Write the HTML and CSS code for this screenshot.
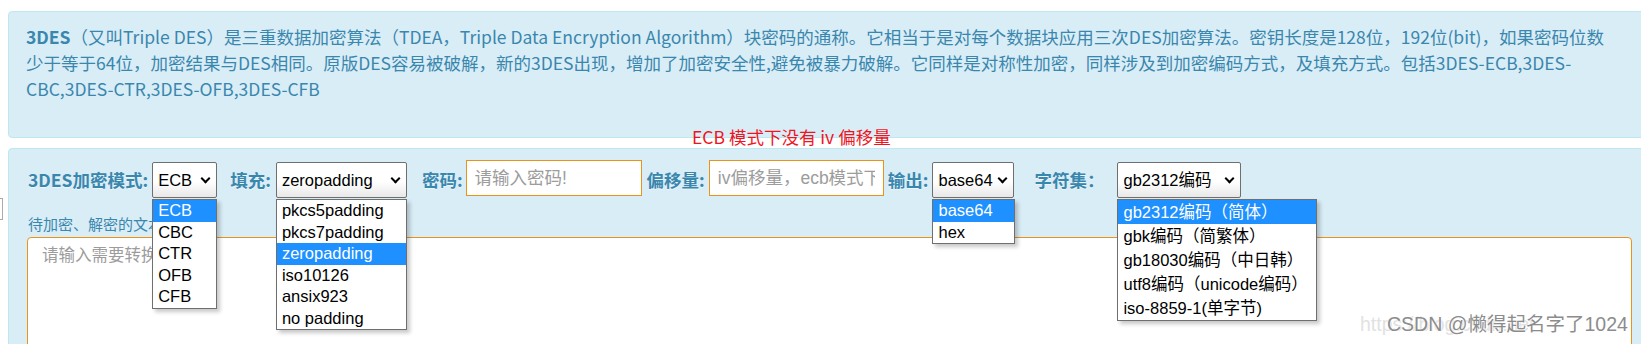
FILE: index.html
```html
<!DOCTYPE html>
<html lang="zh-CN">
<head>
  <meta charset="UTF-8" />
  <title>3DES加密解密</title>
  <link rel="stylesheet" href="styles.css">
</head>
<body>
  <div class="page">
    <div class="alert intro">
      <p><b>3DES</b>（又叫Triple DES）是三重数据加密算法（TDEA，Triple Data Encryption Algorithm）块密码的通称。它相当于是对每个数据块应用三次DES加密算法。密钥长度是128位，192位(bit)，如果密码位数少于等于64位，加密结果与DES相同。原版DES容易被破解，新的3DES出现，增加了加密安全性,避免被暴力破解。它同样是对称性加密，同样涉及到加密编码方式，及填充方式。包括3DES-ECB,3DES-CBC,3DES-CTR,3DES-OFB,3DES-CFB</p>
    </div>

    <div class="tip">ECB 模式下没有 iv 偏移量</div>

    <div class="alert tool">
      <div class="row">
        <label class="lbl">3DES加密模式:</label>
        <div class="sel sel-mode">
          <select><option>ECB</option></select>
          <ul class="pop">
            <li class="on">ECB</li>
            <li>CBC</li>
            <li>CTR</li>
            <li>OFB</li>
            <li>CFB</li>
          </ul>
        </div>

        <label class="lbl lbl-pad">填充:</label>
        <div class="sel sel-pad">
          <select><option>zeropadding</option></select>
          <ul class="pop">
            <li>pkcs5padding</li>
            <li>pkcs7padding</li>
            <li class="on">zeropadding</li>
            <li>iso10126</li>
            <li>ansix923</li>
            <li>no padding</li>
          </ul>
        </div>

        <label class="lbl lbl-key">密码:</label>
        <input type="text" class="txt txt-key" placeholder="请输入密码!">

        <label class="lbl lbl-iv">偏移量:</label>
        <input type="text" class="txt txt-iv" placeholder="iv偏移量，ecb模式下不需要">

        <label class="lbl lbl-out">输出:</label>
        <div class="sel sel-out">
          <select><option>base64</option></select>
          <ul class="pop">
            <li class="on">base64</li>
            <li>hex</li>
          </ul>
        </div>

        <label class="lbl lbl-cs">字符集：</label>
        <div class="sel sel-cs">
          <select><option>gb2312编码</option></select>
          <ul class="pop pop-cjk">
            <li class="on">gb2312编码（简体）</li>
            <li>gbk编码（简繁体）</li>
            <li>gb18030编码（中日韩）</li>
            <li>utf8编码（unicode编码）</li>
            <li>iso-8859-1(单字节)</li>
          </ul>
        </div>
      </div>

      <div class="hint">待加密、解密的文本：</div>
      <textarea class="src" placeholder="请输入需要转换的文本"></textarea>
    </div>

    <div class="stub"></div>

    <div class="mark">
      <span class="mark-url">https://blog.csdn.net</span>
      <span class="mark-name">CSDN @懒得起名字了1024</span>
    </div>
  </div>
</body>
</html>
```

FILE: styles.css
```css
:root {
  --info-bg: #d9edf7;
  --info-border: #bce8f1;
  --info-text: #3a87ad;
  --orange: #eb9316;
  --pick: #1e90ff;
}

html, body {
  margin: 0;
  padding: 0;
  background: #fff;
  overflow: hidden;
}

.page {
  position: relative;
  padding: 11px 0 0 8px;
  width: 1643px;
  height: 344px;
  box-sizing: border-box;
  font-family: "Noto Sans CJK SC", sans-serif;
}

.alert {
  background: var(--info-bg);
  border: 1px solid var(--info-border);
  border-radius: 4px;
  color: var(--info-text);
  width: 1643px;
  box-sizing: border-box;
}

/* intro */
.intro {
  padding: 12px 18px 35px 17px;
}

.intro p {
  margin: 0;
  max-width: 1585px;
  font-size: 17.5px;
  line-height: 26px;
}

.tip {
  position: absolute;
  left: 692px;
  top: 126px;
  color: #f0141e;
  font-size: 17.5px;
  line-height: 22px;
}

/* tool panel */
.tool {
  margin-top: 10px;
  padding: 11px 18px 0 18px;
  height: 230px;
}

.row {
  display: flex;
  align-items: flex-start;
  height: 38px;
}

.lbl {
  font-weight: bold;
  font-size: 17.5px;
  line-height: 36px;
  margin-top: 2px;
  text-shadow: 0 1px 0 rgba(255,255,255,0.5);
  white-space: nowrap;
}

.lbl { margin-left: 1px; margin-right: 4px; }
.lbl-pad { margin-left: 13px; margin-right: 5px; }
.lbl-key { margin-left: 15px; margin-right: 3px; }
.lbl-iv { margin-left: 5px; margin-right: 4px; }
.lbl-out { margin-left: 4px; margin-right: 4px; }
.lbl-cs { margin-left: 20px; margin-right: 13px; }

.sel {
  position: relative;
  margin-top: 2px;
}

.sel select {
  appearance: none;
  -webkit-appearance: none;
  display: block;
  height: 36px;
  margin: 0;
  padding: 0 0 0 5px;
  border: 1px solid #6f6f6f;
  border-radius: 2px;
  background: linear-gradient(#fff 55%, #e8e8e8);
  color: #000;
  font-family: "Liberation Sans", "Noto Sans CJK SC", sans-serif;
  font-size: 16.5px;
  outline: none;
}

.sel::after {
  content: "";
  position: absolute;
  right: 8px;
  top: 13px;
  width: 5px;
  height: 5px;
  border-right: 2.5px solid #000;
  border-bottom: 2.5px solid #000;
  transform: rotate(45deg);
  pointer-events: none;
}

.sel-mode select { width: 65px; }
.sel-pad select { width: 131px; }
.sel-out select { width: 82px; }
.sel-cs select { width: 124px; }

.pop {
  position: absolute;
  left: 0;
  top: 37px;
  margin: 0;
  padding: 0;
  list-style: none;
  background: #fff;
  border: 1px solid #6f6f6f;
  box-shadow: 3px 3px 4px rgba(0,0,0,0.22);
  font-family: "Liberation Sans", "Noto Sans CJK SC", sans-serif;
  font-size: 16.5px;
  color: #000;
  z-index: 5;
}

.pop li {
  height: 21.5px;
  line-height: 21.5px;
  padding: 0 5px;
  white-space: nowrap;
}

.pop li.on {
  background: var(--pick);
  color: #fff;
}

.sel-mode .pop { width: 65px; box-sizing: border-box; }
.sel-pad .pop { width: 131px; box-sizing: border-box; }
.sel-out .pop { width: 83px; box-sizing: border-box; }
.sel-cs .pop { width: 200px; box-sizing: border-box; }

.pop-cjk li {
  height: 24px;
  line-height: 24px;
}

.txt {
  height: 36px;
  box-sizing: border-box;
  margin: 0;
  padding: 0 8px;
  border: 1px solid var(--orange);
  background: #fff;
  font-family: "Liberation Sans", "Noto Sans CJK SC", sans-serif;
  font-size: 17.5px;
  outline: none;
}

.txt::placeholder,
.src::placeholder {
  color: #9c9c9c;
}

.txt-key { width: 176px; }
.txt-iv { width: 175px; }

.hint {
  margin-top: 16px;
  font-size: 15px;
  line-height: 20px;
  margin-left: 1px;
}

.src {
  display: block;
  margin-top: 3px;
  width: 100%;
  height: 190px;
  box-sizing: border-box;
  padding: 4px 14px;
  border: 1px solid var(--orange);
  border-radius: 4px;
  background: #fff;
  resize: none;
  font-family: "Noto Sans CJK SC", sans-serif;
  font-size: 16.5px;
  outline: none;
}

.stub {
  position: absolute;
  left: -30px;
  top: 198px;
  width: 31px;
  height: 20px;
  border: 1px solid #aaa;
}

/* watermark */
.mark {
  position: absolute;
  left: 1360px;
  top: 309px;
  white-space: nowrap;
  font-family: "Liberation Sans", "Noto Sans CJK SC", sans-serif;
  font-size: 19.5px;
  line-height: 30px;
}

.mark-url {
  position: absolute;
  left: 0;
  top: 0;
  color: #e2e2e2;
}

.mark-name {
  position: relative;
  margin-left: 27px;
  color: #8c8c8c;
  text-shadow: 0 0 2px #fff, 0 0 2px #fff;
}
```
